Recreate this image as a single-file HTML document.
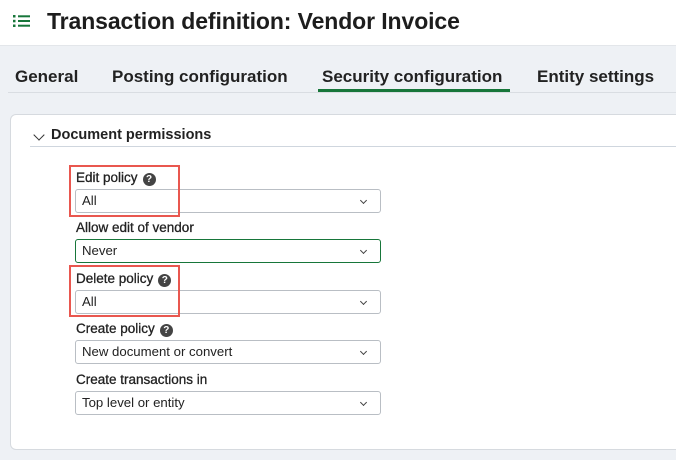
<!DOCTYPE html>
<html><head><style>
*{box-sizing:border-box;margin:0;padding:0}
body{width:676px;height:460px;overflow:hidden;background:#eef1f5;font-family:"Liberation Sans",Arial,sans-serif;color:#222;position:relative}
.hdr{position:absolute;left:0;top:0;width:676px;height:46px;background:#fff;border-bottom:1px solid #e3e6ea}
.title{position:absolute;left:47px;top:8px;font-size:23px;font-weight:bold;color:#1d1d1d;letter-spacing:-0.1px}
.tab{position:absolute;top:67px;font-size:17px;font-weight:bold;color:#222}
.tabline{position:absolute;left:8px;top:92px;width:668px;height:1px;background:#d9dde2}
.uline{position:absolute;left:318px;top:89px;width:192px;height:3px;background:#17763a}
.card{position:absolute;left:10px;top:114px;width:680px;height:336px;background:#fff;border:1px solid #d6dadf;border-radius:6px}
.sec{position:absolute;left:51px;top:127px;font-size:14.5px;font-weight:bold;color:#222}
.chev{position:absolute;left:35px;top:131px;width:8px;height:8px;border-right:1.3px solid #333;border-bottom:1.3px solid #333;transform:rotate(45deg)}
.secline{position:absolute;left:30px;top:146px;width:646px;height:1px;background:#cfd6de}
.lbl{position:absolute;left:76px;font-size:13.5px;color:#222;-webkit-text-stroke:0.3px #222}
.q{display:inline-block;width:13px;height:13px;border-radius:50%;background:#444;color:#fff;font-size:10px;font-weight:bold;text-align:center;line-height:13px;margin-left:5px;vertical-align:0px;-webkit-text-stroke:0}
.sel{position:absolute;left:75px;width:306px;height:24px;border:1px solid #b9bec4;border-radius:3px;font-size:13.2px;padding-left:6px;line-height:22px;background:#fff}
.sel:after{content:"";position:absolute;right:14px;top:8px;width:4px;height:4px;border-right:1px solid #444;border-bottom:1px solid #444;transform:rotate(45deg)}
.red{position:absolute;left:69px;width:111px;height:52px;border:2px solid #e9574f}
</style></head><body>
<div class="hdr">
<svg style="position:absolute;left:13px;top:14px" width="18" height="14" viewBox="0 0 18 14"><g fill="#17763a"><rect x="0" y="1" width="2.5" height="2.5"/><rect x="0" y="5.8" width="2.5" height="2.5"/><rect x="0" y="10.5" width="2.5" height="2.5"/><rect x="5" y="1.3" width="12" height="2"/><rect x="5" y="6" width="12" height="2"/><rect x="5" y="10.7" width="12" height="2"/></g></svg>
<div class="title">Transaction definition: Vendor Invoice</div>
</div>
<div class="tab" style="left:15px">General</div>
<div class="tab" style="left:112px">Posting configuration</div>
<div class="tab" style="left:322px">Security configuration</div>
<div class="tab" style="left:537px">Entity settings</div>
<div class="tabline"></div><div class="uline"></div>
<div class="card"></div>
<div class="chev"></div>
<div class="sec">Document permissions</div>
<div class="secline"></div>

<div class="lbl" style="top:170px">Edit policy<span class="q">?</span></div>
<div class="sel" style="top:189px">All</div>
<div class="lbl" style="top:220px">Allow edit of vendor</div>
<div class="sel" style="top:239px;border-color:#17763a">Never</div>
<div class="lbl" style="top:271px">Delete policy<span class="q">?</span></div>
<div class="sel" style="top:290px">All</div>
<div class="lbl" style="top:321px">Create policy<span class="q">?</span></div>
<div class="sel" style="top:340px">New document or convert</div>
<div class="lbl" style="top:372px">Create transactions in</div>
<div class="sel" style="top:391px">Top level or entity</div>

<div class="red" style="top:165px"></div>
<div class="red" style="top:265px"></div>
</body></html>
